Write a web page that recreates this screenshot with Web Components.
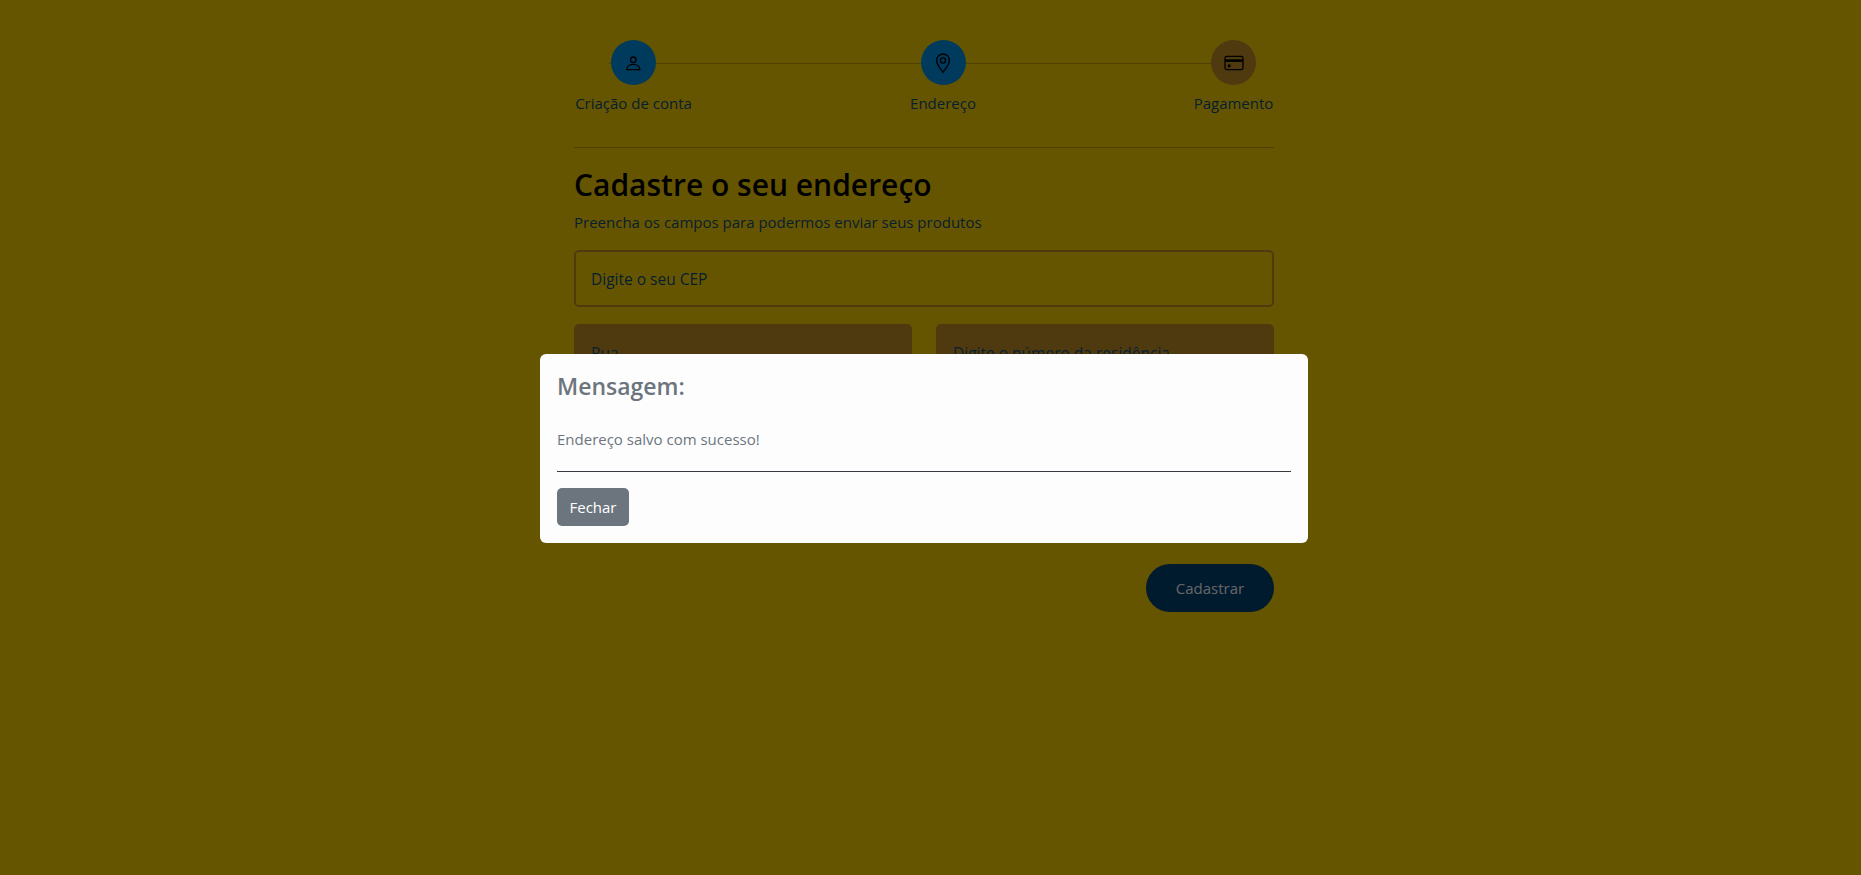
<!DOCTYPE html>
<html lang="pt-BR">
<head>
<meta charset="utf-8">
<title>Cadastro de endereço</title>
<style>
  html, body { margin: 0; height: 100%; }
  body { background: #ffd500; font-family: "Open Sans", "Noto Sans", sans-serif; }
</style>
</head>
<body>
<checkout-page>
  <progress-steps slot="steps">
    <progress-step label="Criação de conta" width="119" state="done">
      <svg viewBox="0.7 0 24 24" width="24" height="24" fill="none" stroke="#000" stroke-width="1.3"><circle cx="12" cy="8.800" r="2.800"/><path d="M5.500 18.300c0-3 2.900-5 6.500-5s6.500 2 6.500 5v.4h-13z"/></svg>
    </progress-step>
    <progress-step label="Endereço" width="64" state="done">
      <svg viewBox="0 0 24 24" width="24" height="24" fill="none" stroke="#000" stroke-width="1.300"><path d="M12 21.300c-1-1.700-6.400-7.500-6.400-11.900a6.400 6.400 0 0 1 12.800 0c0 4.400-5.400 10.200-6.400 11.900z"/><circle cx="12" cy="9.500" r="2.600"/></svg>
    </progress-step>
    <progress-step label="Pagamento" width="81" state="pending">
      <svg viewBox="0 0 24 24" width="24" height="24"><rect x="3" y="5.400" width="18" height="13.200" rx="1.800" fill="none" stroke="#000" stroke-width="1.300"/><rect x="3" y="8.300" width="18" height="2.600" fill="#000"/><rect x="5.800" y="13.500" width="2.700" height="2.700" fill="#000"/></svg>
    </progress-step>
  </progress-steps>

  <address-form slot="form">
    <text-field variant="outline" class="wide">Digite o seu CEP</text-field>
    <text-field>Rua</text-field>
    <text-field>Digite o número da residência</text-field>
    <text-field></text-field>
    <text-field></text-field>
    <text-field></text-field>
    <text-field></text-field>
    <pill-button class="wide">Cadastrar</pill-button>
  </address-form>

  <message-dialog slot="dialog" heading="Mensagem:" close-label="Fechar">Endereço salvo com sucesso!</message-dialog>
</checkout-page>

<script>
class CheckoutPage extends HTMLElement {
  constructor() {
    super();
    this.attachShadow({mode: 'open'}).innerHTML = `
      <style>
        :host { display: block; min-height: 875px; box-sizing: border-box; padding-right: 13px; }
        main { width: 700px; margin: 0 auto; padding-top: 40px; }
        hr { height: 1px; border: 0; margin: 32px 0 0; background: #c0a000; }
        h1 { margin: 18px 0 0; font-size: 30px; line-height: 38px; font-weight: 600; color: #000; }
        p { margin: 6px 0 16px; font-size: 15px; line-height: 24px; color: #0f4f75; }
        .overlay { position: fixed; inset: 0; background: rgba(0,0,0,.6); }
        .dialog { position: fixed; inset: 354px 13px auto 0; display: flex; justify-content: center; }
      </style>
      <main>
        <slot name="steps"></slot>
        <hr>
        <h1>Cadastre o seu endereço</h1>
        <p>Preencha os campos para podermos enviar seus produtos</p>
        <slot name="form"></slot>
      </main>
      <div class="overlay"></div>
      <div class="dialog"><slot name="dialog"></slot></div>
    `;
  }
}

class ProgressSteps extends HTMLElement {
  constructor() {
    super();
    this.attachShadow({mode: 'open'}).innerHTML = `
      <style>
        :host { display: flex; justify-content: space-between; position: relative; }
        :host::before {
          content: ''; position: absolute; left: 35px; right: 20px; top: 23px;
          height: 1px; background: #c0a000;
        }
      </style>
      <slot></slot>
    `;
  }
}

class ProgressStep extends HTMLElement {
  constructor() {
    super();
    this.attachShadow({mode: 'open'});
  }

  connectedCallback() {
    const label = this.getAttribute('label');
    const color = this.getAttribute('state') === 'done' ? '#0091e6' : '#c69128';
    this.shadowRoot.innerHTML = `
      <style>
        :host {
          display: flex; flex-direction: column; align-items: center; position: relative;
          width: ${this.getAttribute('width')}px;
        }
        .circle {
          width: 45px; height: 45px; border-radius: 50%; background: ${color};
          display: flex; align-items: center; justify-content: center;
        }
        span {
          margin-top: 6px; font-size: 15px; line-height: 24px; color: #0f4f75; white-space: nowrap;
        }
      </style>
      <div class="circle"><slot></slot></div>
      <span>${label}</span>
    `;
  }
}

class AddressForm extends HTMLElement {
  constructor() {
    super();
    this.attachShadow({mode: 'open'}).innerHTML = `
      <style>
        :host { display: grid; grid-template-columns: 338px 338px; justify-content: space-between; row-gap: 17px; }
        ::slotted(.wide) { grid-column: 1 / -1; }
        ::slotted(pill-button) { margin-top: 18px; }
      </style>
      <slot></slot>
    `;
  }
}

class TextField extends HTMLElement {
  constructor() {
    super();
    this.attachShadow({mode: 'open'}).innerHTML = `
      <style>
        :host {
          display: flex; align-items: center; box-sizing: border-box; height: 57px;
          padding: 0 17px; border-radius: 5px; font-size: 15.5px; color: #0f4f75;
          background: #c69128; white-space: nowrap;
        }
        :host([variant="outline"]) { background: none; border: 2px solid #c69128; padding: 0 15px; }
      </style>
      <slot></slot>
    `;
  }
}

class PillButton extends HTMLElement {
  constructor() {
    super();
    this.attachShadow({mode: 'open'}).innerHTML = `
      <style>
        :host { display: flex; justify-content: flex-end; }
        button {
          width: 128px; height: 48px; border: 0; border-radius: 24px;
          background: #004173; color: #fff; font: 15px "Open Sans", "Noto Sans", sans-serif;
        }
      </style>
      <button><slot></slot></button>
    `;
  }
}

class MessageDialog extends HTMLElement {
  constructor() {
    super();
    this.attachShadow({mode: 'open'});
  }

  connectedCallback() {
    this.shadowRoot.innerHTML = `
      <style>
        :host {
          display: block; box-sizing: border-box; width: 768px; height: 189px;
          padding: 18px 17px 17px; border-radius: 6px; background: #fdfdfe; color: #6c757d;
        }
        h2 { margin: 0; font-size: 23px; line-height: 29px; font-weight: 600; }
        p { margin: 26px 0 0; font-size: 15px; line-height: 24px; }
        hr { height: 1px; border: 0; margin: 20px 0 16px; background: #343a40; }
        button {
          display: block; width: 72px; height: 38px; padding: 0; border: 0; border-radius: 5px;
          background: #6c757d; color: #fff; font: 15px "Open Sans", "Noto Sans", sans-serif;
        }
      </style>
      <h2>${this.getAttribute('heading')}</h2>
      <p><slot></slot></p>
      <hr>
      <button>${this.getAttribute('close-label')}</button>
    `;
  }
}

customElements.define('checkout-page', CheckoutPage);
customElements.define('progress-steps', ProgressSteps);
customElements.define('progress-step', ProgressStep);
customElements.define('address-form', AddressForm);
customElements.define('text-field', TextField);
customElements.define('pill-button', PillButton);
customElements.define('message-dialog', MessageDialog);
</script>
</body>
</html>
